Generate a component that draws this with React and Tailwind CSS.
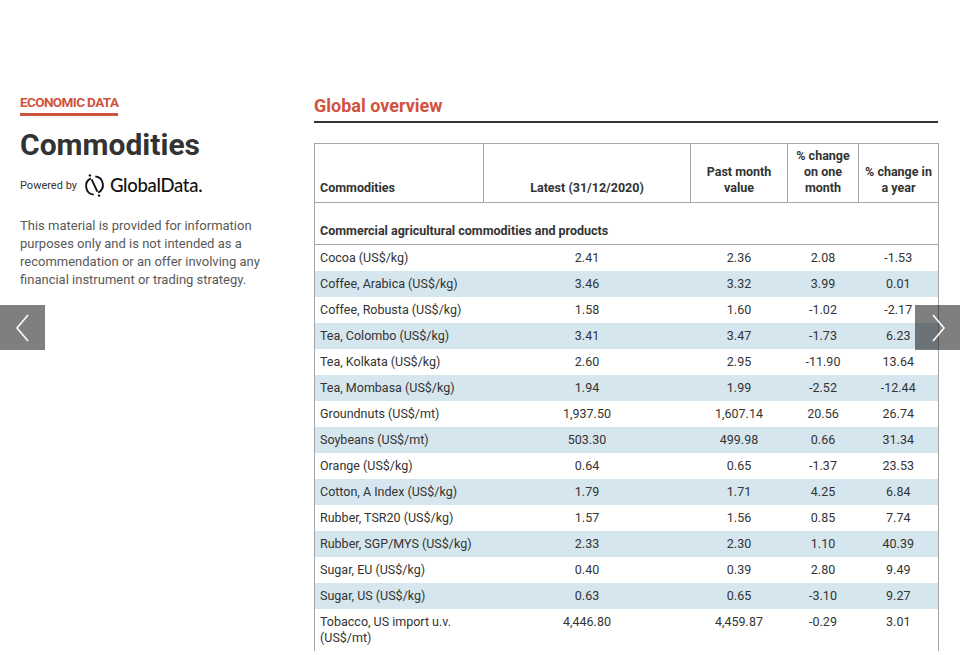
import React from "react";

const rows = [
  ["Cocoa (US$/kg)", "2.41", "2.36", "2.08", "-1.53"],
  ["Coffee, Arabica (US$/kg)", "3.46", "3.32", "3.99", "0.01"],
  ["Coffee, Robusta (US$/kg)", "1.58", "1.60", "-1.02", "-2.17"],
  ["Tea, Colombo (US$/kg)", "3.41", "3.47", "-1.73", "6.23"],
  ["Tea, Kolkata (US$/kg)", "2.60", "2.95", "-11.90", "13.64"],
  ["Tea, Mombasa (US$/kg)", "1.94", "1.99", "-2.52", "-12.44"],
  ["Groundnuts (US$/mt)", "1,937.50", "1,607.14", "20.56", "26.74"],
  ["Soybeans (US$/mt)", "503.30", "499.98", "0.66", "31.34"],
  ["Orange (US$/kg)", "0.64", "0.65", "-1.37", "23.53"],
  ["Cotton, A Index (US$/kg)", "1.79", "1.71", "4.25", "6.84"],
  ["Rubber, TSR20 (US$/kg)", "1.57", "1.56", "0.85", "7.74"],
  ["Rubber, SGP/MYS (US$/kg)", "2.33", "2.30", "1.10", "40.39"],
  ["Sugar, EU (US$/kg)", "0.40", "0.39", "2.80", "9.49"],
  ["Sugar, US (US$/kg)", "0.63", "0.65", "-3.10", "9.27"],
  ["Tobacco, US import u.v. (US$/mt)", "4,446.80", "4,459.87", "-0.29", "3.01"],
];

function Logo() {
  return (
    <div className="flex items-center gap-[5px]">
      <svg width="21" height="25" viewBox="0 0 22 26">
        <path d="M7.2 5.6 A9 9 0 0 0 10.2 22.6" fill="none" stroke="#111" strokeWidth="2" />
        <path d="M14.8 20.4 A9 9 0 0 0 11.8 3.4" fill="none" stroke="#111" strokeWidth="2" />
        <line x1="8" y1="6.5" x2="14" y2="19.5" stroke="#111" strokeWidth="2" />
        <circle cx="6.2" cy="2.4" r="1.3" fill="#111" />
        <circle cx="15.8" cy="23.6" r="1.3" fill="#111" />
      </svg>
      <span className="text-[18.5px] font-medium tracking-[-0.3px] text-[#111]" style={{ fontFamily: "Lato, 'Open Sans', sans-serif" }}>
        GlobalData.
      </span>
    </div>
  );
}

function Chevron({ dir }) {
  return (
    <svg width="16" height="30" viewBox="0 0 16 30">
      {dir === "left" ? (
        <polyline points="13,2 2,15 13,28" fill="none" stroke="#fff" strokeWidth="1.6" />
      ) : (
        <polyline points="3,2 14,15 3,28" fill="none" stroke="#fff" strokeWidth="1.6" />
      )}
    </svg>
  );
}

export default function App() {
  return (
    <div className="relative w-[960px] h-[655px] overflow-hidden bg-white" style={{ fontFamily: "Roboto, 'Liberation Sans', sans-serif" }}>
      <div className="flex pt-[94px] pl-[20px]">
        <div className="w-[240px] shrink-0">
          <div className="w-fit border-b-[3px] border-[#d0533d] pb-[3px] text-[13.5px] font-bold tracking-[-0.6px] text-[#d0533d] leading-[16px]">
            ECONOMIC DATA
          </div>
          <h1 className="mt-[11px] text-[30px] font-bold leading-[36px] text-[#333]">Commodities</h1>
          <div className="mt-[9px] flex items-center gap-[7px]">
            <span className="text-[11px] text-[#333]">Powered by</span>
            <Logo />
          </div>
          <p className="mt-[17px] text-[13px] leading-[18px] text-[#595959]">
            This material is provided for information purposes only and is not intended as a recommendation or an offer involving any financial instrument or trading strategy.
          </p>
        </div>
        <div className="ml-[54px] w-[624px] shrink-0">
          <h2 className="mt-[1px] text-[18px] font-bold leading-[22px] text-[#d0533d]">Global overview</h2>
          <div className="mt-[4px] h-[2px] bg-[#333]"></div>
          <table className="mt-[20px] w-[625px] border-collapse text-[12.5px] text-[#333]" style={{ tableLayout: "fixed" }}>
            <colgroup>
              <col style={{ width: 169 }} />
              <col style={{ width: 207 }} />
              <col style={{ width: 97 }} />
              <col style={{ width: 71 }} />
              <col style={{ width: 80 }} />
            </colgroup>
            <thead>
              <tr className="h-[59px]">
                <th className="border border-[#a6a6a6] px-[5px] pb-[6px] text-left align-bottom text-[12.5px] font-bold leading-[16px]">Commodities</th>
                <th className="border border-[#a6a6a6] px-[5px] pb-[6px] text-center align-bottom text-[12.5px] font-bold leading-[16px]">Latest (31/12/2020)</th>
                <th className="border border-[#a6a6a6] px-[5px] pb-[6px] text-center align-bottom text-[12.5px] font-bold leading-[16px]">Past month<br />value</th>
                <th className="border border-[#a6a6a6] px-[4px] pb-[6px] text-center align-bottom text-[12.5px] font-bold leading-[16px]">% change<br />on one<br />month</th>
                <th className="border border-[#a6a6a6] px-[2px] pb-[6px] text-center align-bottom text-[12.5px] font-bold leading-[16px]">% change in<br />a year</th>
              </tr>
            </thead>
            <tbody>
              <tr className="h-[42px]">
                <td colSpan={5} className="border border-[#a6a6a6] px-[5px] pb-[5px] align-bottom text-[12.5px] font-bold leading-[16px]">
                  Commercial agricultural commodities and products
                </td>
              </tr>
              {rows.map((r, i) => (
                <tr key={i} className={i % 2 === 1 ? "bg-[#d6e6ee]" : "bg-white"}>
                  <td className="border-l border-[#a6a6a6] px-[5px] py-[5px] align-top leading-[16px]">{r[0]}</td>
                  <td className="py-[5px] text-center align-top leading-[16px]">{r[1]}</td>
                  <td className="py-[5px] text-center align-top leading-[16px]">{r[2]}</td>
                  <td className="py-[5px] text-center align-top leading-[16px]">{r[3]}</td>
                  <td className="border-r border-[#a6a6a6] py-[5px] text-center align-top leading-[16px]">{r[4]}</td>
                </tr>
              ))}
            </tbody>
          </table>
        </div>
      </div>
      <button className="absolute left-0 top-[305px] flex h-[45px] w-[45px] items-center justify-center bg-[rgba(0,0,0,0.5)]">
        <Chevron dir="left" />
      </button>
      <button className="absolute right-0 top-[305px] flex h-[45px] w-[45px] items-center justify-center bg-[rgba(0,0,0,0.5)]">
        <Chevron dir="right" />
      </button>
    </div>
  );
}
